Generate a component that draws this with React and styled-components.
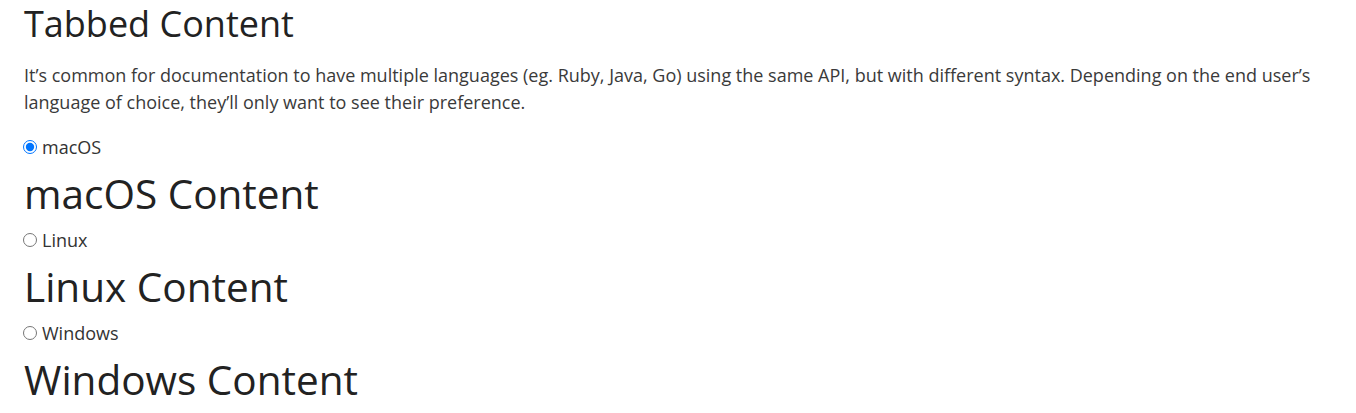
import React, { useState } from 'react';
import styled, { createGlobalStyle } from 'styled-components';

const GlobalStyle = createGlobalStyle`
  html, body {
    margin: 0;
    padding: 0;
    background: #fff;
  }

  body {
    font-family: 'Open Sans', 'Noto Sans', sans-serif;
    color: #222;
  }
`;

const Page = styled.main`
  padding: 0 24px;
`;

const Title = styled.h2`
  margin: 0;
  padding-top: 2px;
  font-size: 36px;
  font-weight: 400;
  line-height: 44px;
`;

const Intro = styled.p`
  margin: 16px 0 19px;
  font-size: 18px;
  line-height: 27px;
  color: #3a3a3a;
`;

const Tabs = styled.div`
  display: flex;
  flex-direction: column;
`;

const TabLabel = styled.label`
  display: flex;
  align-items: center;
  gap: 5px;
  font-size: 18px;
  line-height: 24px;
  color: #333;

  input {
    margin: 0 0 0 -1px;
    width: 14px;
    height: 14px;
  }
`;

const TabContent = styled.h1`
  margin: 0;
  font-size: 40.5px;
  font-weight: 400;
  line-height: 69px;
`;

const tabs = ['macOS', 'Linux', 'Windows'];

const App = () => {
  const [active, setActive] = useState('macOS');

  return (
    <Page>
      <GlobalStyle />
      <Title>Tabbed Content</Title>
      <Intro>
        It’s common for documentation to have multiple languages (eg. Ruby, Java, Go) using the same API, but with
        different syntax. Depending on the end user’s language of choice, they’ll only want to see their preference.
      </Intro>
      <Tabs>
        {tabs.map((tab) => (
          <React.Fragment key={tab}>
            <TabLabel>
              <input
                type="radio"
                name="os"
                checked={active === tab}
                onChange={() => setActive(tab)}
              />
              {tab}
            </TabLabel>
            <TabContent>{tab} Content</TabContent>
          </React.Fragment>
        ))}
      </Tabs>
    </Page>
  );
};

export default App;
